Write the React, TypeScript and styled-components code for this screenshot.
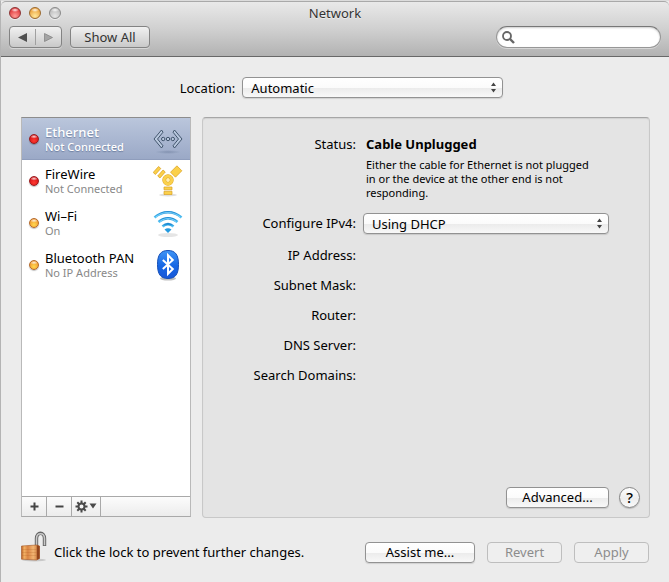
import React from "react";
import styled, { createGlobalStyle, css } from "styled-components";

const GlobalStyle = createGlobalStyle`
  * { box-sizing: border-box; }
  body {
    margin: 0;
    background: #ececec;
    color: #000;
    font-family: "Noto Sans", "Open Sans", sans-serif;
    font-size: 13px;
    line-height: 20px;
  }
  button, input, select { font: inherit; color: inherit; margin: 0; }
`;

const Window = styled.div`
  display: flex;
  flex-direction: column;
  min-height: 100vh;
  border-left: 1px solid #b4b4b4;
  border-top: 1px solid #dcdcdc;
`;

const TitleBar = styled.header`
  height: 56px;
  padding: 1px 8px 0;
  border-top: 1px solid #a9a9a9;
  border-bottom: 1px solid #686868;
  border-radius: 5px 5px 0 0;
  background: linear-gradient(#e9e9e9, #d0d0d0 50%, #b2b2b2);
`;

const TitleRow = styled.div`
  display: grid;
  grid-template-columns: 1fr auto 1fr;
  align-items: center;
  height: 20px;
`;

const Title = styled.h1`
  margin: 0;
  font-size: 13px;
  font-weight: 400;
  color: #333;
  text-shadow: 0 1px 0 rgba(255, 255, 255, 0.5);
`;

const Lights = styled.div`
  display: flex;
  gap: 8px;
`;

const Light = styled.button<{ $edge: string; $dark: string; $pale: string }>`
  width: 12px;
  height: 12px;
  padding: 0;
  border: 1px solid ${(p) => p.$edge};
  border-radius: 50%;
  background:
    radial-gradient(ellipse 4px 2px at 50% 20%, rgba(255, 255, 255, 0.9), rgba(255, 255, 255, 0)),
    radial-gradient(circle at 50% 80%, ${(p) => p.$pale}, ${(p) => p.$dark} 75%);
  box-shadow: 0 1px 0 rgba(255, 255, 255, 0.5);
`;

const Toolbar = styled.div`
  display: flex;
  align-items: center;
  margin-top: 3px;
  gap: 8px;
`;

const toolSurface = css`
  height: 22px;
  border: 1px solid #838383;
  border-radius: 4px;
  background: linear-gradient(#f1f1f1, #c9c9c9);
  box-shadow: 0 1px 0 rgba(255, 255, 255, 0.4);
`;

const ToolButton = styled.button`
  ${toolSurface}
  width: 80px;
  padding: 0;
  line-height: 20px;
  color: #333;
`;

const NavGroup = styled.div`
  ${toolSurface}
  display: flex;
  align-items: center;
  width: 53px;
`;

const NavButton = styled.button`
  display: flex;
  flex: 1;
  justify-content: center;
  align-items: center;
  height: 16px;
  padding: 0;
  border: 0;
  background: none;
  & + & { border-left: 1px solid #a0a0a0; }
`;

const SearchField = styled.label`
  display: flex;
  align-items: center;
  gap: 4px;
  width: 165px;
  height: 22px;
  margin-left: auto;
  padding: 0 8px 0 5px;
  border: 1px solid #979797;
  border-top-color: #777;
  border-radius: 11px;
  background: #fff;
  box-shadow: inset 0 1px 2px rgba(0, 0, 0, 0.2), 0 1px 0 rgba(255, 255, 255, 0.4);
`;

const SearchInput = styled.input`
  flex: 1;
  min-width: 0;
  padding: 0;
  border: 0;
  outline: 0;
  background: none;
`;

const Content = styled.main`
  display: flex;
  flex: 1;
  flex-direction: column;
  padding: 20px 19px 0 20px;
`;

const LocationRow = styled.div`
  display: flex;
  justify-content: center;
  align-items: center;
  gap: 7px;
  height: 21px;
  margin-bottom: 19px;
  padding-left: 12px;
`;

const SelectBox = styled.span<{ $width: number }>`
  display: flex;
  align-items: center;
  width: ${(p) => p.$width}px;
  height: 21px;
  padding-right: 5px;
  border: 1px solid #929292;
  border-radius: 4px;
  background: linear-gradient(#fff, #fbfbfb 50%, #ebebeb 52%, #f8f8f8);
  box-shadow: 0 1px 1px rgba(0, 0, 0, 0.12);
`;

const SelectInput = styled.select`
  flex: 1;
  height: 19px;
  padding: 0 0 0 8px;
  border: 0;
  outline: 0;
  appearance: none;
  background: none;
`;

const Columns = styled.div`
  display: flex;
  flex: 1;
  gap: 11px;
`;

const Sidebar = styled.aside`
  display: flex;
  flex: none;
  flex-direction: column;
  width: 170px;
  margin-bottom: 1px;
  border: 1px solid #b9b9b9;
  border-top-color: #8c8c8c;
  border-bottom-color: #a9a9a9;
  background: #fff;
`;

const Services = styled.ul`
  flex: 1;
  margin: 0;
  padding: 0;
  list-style: none;
`;

const Service = styled.li<{ $selected: boolean }>`
  display: flex;
  align-items: center;
  height: 42px;
  padding: 0 7px;
  ${(p) =>
    p.$selected &&
    css`
      color: #fff;
      background: linear-gradient(#bac6dc, #9aa8c6);
      box-shadow: inset 0 -1px 0 #8f9dbc;
      text-shadow: 0 1px 1px rgba(60, 80, 120, 0.5);
    `}
`;

const Dot = styled.span<{ $color: "red" | "amber" }>`
  width: 10px;
  height: 10px;
  margin-right: 6px;
  border: 1px solid ${(p) => (p.$color === "red" ? "#9a1a1c" : "#b56a2a")};
  border-radius: 50%;
  background:
    radial-gradient(ellipse 4px 2px at 50% 20%, rgba(255, 255, 255, 0.8), rgba(255, 255, 255, 0)),
    radial-gradient(circle at 50% 70%, ${(p) => (p.$color === "red" ? "#ff3a30, #c80610" : "#ffd950, #ee8424")});
  box-shadow: 0 1px 1px rgba(0, 0, 0, 0.25);
`;

const ServiceText = styled.div`
  flex: 1;
`;

const ServiceName = styled.div<{ $selected: boolean }>`
  font-weight: ${(p) => (p.$selected ? 500 : 400)};
  line-height: 15px;
`;

const ServiceState = styled.div<{ $selected: boolean }>`
  font-size: 11px;
  font-weight: ${(p) => (p.$selected ? 500 : 400)};
  line-height: 14px;
  color: ${(p) => (p.$selected ? "#fff" : "#888")};
`;

const ListActions = styled.div`
  display: flex;
  height: 20px;
  border-top: 1px solid #a9a9a9;
  background: linear-gradient(#fcfcfc, #f4f4f4 50%, #ececec);
`;

const ListButton = styled.button<{ $width: number }>`
  display: flex;
  justify-content: center;
  align-items: center;
  width: ${(p) => p.$width}px;
  padding: 0;
  border: 0;
  border-right: 1px solid #a9a9a9;
  background: none;
`;

const Panel = styled.section`
  display: flex;
  flex: 1;
  flex-direction: column;
  padding: 16px 9px 9px;
  border: 1px solid #c8c8c8;
  border-top-color: #a6a6a6;
  border-radius: 4px;
  background: #e4e4e4;
  box-shadow: inset 0 1px 1px rgba(0, 0, 0, 0.08);
`;

const Fields = styled.div`
  display: grid;
  grid-template-columns: 144px 1fr;
  align-items: center;
  column-gap: 7px;
`;

const FieldLabel = styled.label<{ $tall?: boolean }>`
  line-height: ${(p) => (p.$tall ? 34 : 30)}px;
  text-align: right;
`;

const StatusLabel = styled.span`
  align-self: start;
  text-align: right;
`;

const Value = styled.output`
  line-height: 30px;
`;

const Status = styled.div`
  padding-left: 3px;
`;

const StatusTitle = styled.strong`
  display: block;
  font-weight: 700;
`;

const StatusText = styled.p`
  max-width: 232px;
  margin: 4px 0 6px;
  font-size: 11px;
  line-height: 14px;
`;

const PanelActions = styled.div`
  display: flex;
  justify-content: flex-end;
  align-items: center;
  gap: 10px;
  margin-top: auto;
`;

const PushButton = styled.button<{ $width: number }>`
  width: ${(p) => p.$width}px;
  height: 21px;
  padding: 0 0 1px;
  border: 1px solid #929292;
  border-radius: 4px;
  background: linear-gradient(#fff, #fbfbfb 50%, #ebebeb 52%, #f8f8f8);
  box-shadow: 0 1px 1px rgba(0, 0, 0, 0.12);
  line-height: 18px;
  &:disabled {
    color: #8c8c8c;
    border-color: #bebebe;
    background: #efefef;
    box-shadow: none;
  }
`;

const HelpButton = styled.button`
  width: 21px;
  height: 21px;
  padding: 0;
  border: 1px solid #858585;
  border-radius: 50%;
  background: linear-gradient(#fff, #ededed 55%, #fafafa);
  box-shadow: 0 1px 1px rgba(0, 0, 0, 0.2);
  font-size: 15px;
  font-weight: 500;
  line-height: 19px;
`;

const Footer = styled.footer`
  display: flex;
  align-items: center;
  gap: 12px;
  height: 64px;
  padding: 4px 1px 0 0;
`;

const LockButton = styled.button`
  display: flex;
  flex: 1;
  align-items: center;
  gap: 7px;
  padding: 0;
  border: 0;
  background: none;
  text-align: left;
  svg { flex: none; margin-top: -12px; }
`;

const Arrows = () => (
  <svg width="7" height="11" viewBox="0 0 7 11" fill="#444" aria-hidden="true">
    <path d="M1 4 3.5 0.5 6 4zM1 7h5L3.5 10.500z" />
  </svg>
);

const EthernetIcon = () => (
  <svg width="30" height="32" viewBox="0 0 30 32" aria-hidden="true">
    <defs>
      <radialGradient id="ethShade">
        <stop offset="0" stopColor="#667797" stopOpacity=".5" />
        <stop offset="1" stopColor="#667797" stopOpacity="0" />
      </radialGradient>
    </defs>
    <ellipse cx="15" cy="29" rx="13" ry="2" fill="url(#ethShade)" />
    <g fill="#b9c8de" stroke="#364961" strokeWidth=".9" strokeLinejoin="round">
      <path d="M8.500 7 10 9.200 4.500 16l5.500 6.800L8.500 25 1 16z" />
      <path d="M21.500 7 20 9.200l5.500 6.800-5.500 6.800 1.500 2.200L29 16z" />
      <circle cx="10.200" cy="16" r="1.700" />
      <circle cx="15" cy="16" r="1.700" />
      <circle cx="19.800" cy="16" r="1.700" />
    </g>
  </svg>
);

const FireWireIcon = () => (
  <svg width="30" height="32" viewBox="0 0 30 32" aria-hidden="true">
    <ellipse cx="15" cy="30" rx="9" ry="1.500" fill="#000" opacity=".12" />
    <g fill="#fbd04a" stroke="#d9a023" strokeWidth=".7" strokeLinejoin="round">
      <rect x="-4.500" y="-3.500" width="9" height="7" transform="translate(23.200 6.500) rotate(-45)" />
      <rect x="-1.500" y="-4" width="3" height="8" transform="translate(4 5.500) rotate(42)" />
      <rect x="-1.500" y="-4" width="3" height="8" transform="translate(8.500 9) rotate(42)" />
      <rect x="11" y="22" width="8" height="2.800" />
      <rect x="11" y="26.300" width="8" height="3.200" />
    </g>
    <circle cx="15" cy="15" r="3.800" fill="#ffeeb0" stroke="#dfa628" strokeWidth="3.800" />
    <circle cx="15" cy="15" r="3.800" fill="none" stroke="#fbd14c" strokeWidth="2.800" />
  </svg>
);

const WifiIcon = () => (
  <svg width="30" height="32" viewBox="0 0 30 32" aria-hidden="true">
    <defs>
      <linearGradient id="wifiBlue" x1="0" y1="0" x2="0" y2="1">
        <stop offset="0" stopColor="#1c8cd5" />
        <stop offset="1" stopColor="#56c3f4" />
      </linearGradient>
    </defs>
    <ellipse cx="15" cy="28" rx="10" ry="2" fill="#000" opacity=".1" />
    <g fill="none" stroke="url(#wifiBlue)" strokeWidth="2.600">
      <path d="M1.500 10.500c8-7 19-7 27 0" />
      <path d="M5.500 15c6-5 13-5 19 0" />
      <path d="M9.500 19.500c3.500-3 7.500-3 11 0" />
    </g>
    <path d="M11.500 22.500q3.500-2.500 7 0L15 26z" fill="#249adf" />
    <g fill="none" stroke="#8bd9ff" strokeWidth=".8">
      <path d="M3 9.900c7.200-6 16.800-6 24 0M7 14.500c5-4 11-4 16 0" />
    </g>
  </svg>
);

const BluetoothIcon = () => (
  <svg width="30" height="32" viewBox="0 0 30 32" aria-hidden="true">
    <defs>
      <linearGradient id="btBlue" x1="0" y1="0" x2="0" y2="1">
        <stop offset="0" stopColor="#3f94f5" />
        <stop offset=".55" stopColor="#1767e4" />
        <stop offset="1" stopColor="#1857d8" />
      </linearGradient>
    </defs>
    <ellipse cx="15" cy="29.500" rx="8" ry="2" fill="#000" opacity=".25" />
    <path
      d="M15 1.500C22.500 1.500 25.500 6 25.500 15.500S22.500 29.500 15 29.500 4.500 25 4.500 15.500 7.500 1.500 15 1.500z"
      fill="url(#btBlue)"
      stroke="#1650b8"
    />
    <path d="M9.800 11 19.800 20 15 24.800V6.200l4.800 4.800L9.800 20" fill="none" stroke="#fff" strokeWidth="2" />
  </svg>
);

const GearIcon = () => (
  <svg width="22" height="13" viewBox="0 0 22 13" aria-hidden="true">
    <g stroke="#4a4a4a" strokeWidth="2">
      <path d="M6.500 .5v12M.5 6.500h12M2.300 2.300l8.400 8.400M10.700 2.300l-8.400 8.400" />
    </g>
    <circle cx="6.500" cy="6.500" r="3" fill="#f4f4f4" stroke="#4a4a4a" strokeWidth="2" />
    <path d="M14.500 3.500h7L18 8.500z" fill="#4a4a4a" />
  </svg>
);

const LockIcon = () => (
  <svg width="26" height="31" viewBox="0 0 26 31" aria-hidden="true">
    <defs>
      <linearGradient id="lockBody" x1="0" y1="0" x2="1" y2="0">
        <stop offset="0" stopColor="#b75d22" />
        <stop offset=".15" stopColor="#f3b265" />
        <stop offset=".35" stopColor="#d98443" />
        <stop offset=".65" stopColor="#f2b572" />
        <stop offset="1" stopColor="#c06c30" />
      </linearGradient>
    </defs>
    <ellipse cx="13" cy="29" rx="12" ry="1.500" fill="#000" opacity=".15" />
    <path d="M15.500 15V7.500c0-7 8-7 8 0V15" fill="none" stroke="#656565" strokeWidth="3.400" />
    <path d="M15.500 15V7.500c0-6.500 8-6.500 8 0v6.800" fill="none" stroke="#c8c8c8" strokeWidth="1.500" />
    <path d="M.5 15 15.500 14l3 1v12.500l-3 1.500-15-.8z" fill="url(#lockBody)" stroke="#a45725" strokeWidth=".6" />
    <path d="M1 18.500h14.500M1 21.500h14.500M1 24.500h14.500" stroke="#a9581f" strokeWidth=".5" opacity=".4" />
    <path d="M15.800 14.200l2.700.8v12.500l-2.700 1.300z" fill="#93451b" />
  </svg>
);

type ServiceItem = {
  name: string;
  state: string;
  color: "red" | "amber";
  icon: React.ReactNode;
};

const services: ServiceItem[] = [
  { name: "Ethernet", state: "Not Connected", color: "red", icon: <EthernetIcon /> },
  { name: "FireWire", state: "Not Connected", color: "red", icon: <FireWireIcon /> },
  { name: "Wi\u2013Fi", state: "On", color: "amber", icon: <WifiIcon /> },
  { name: "Bluetooth PAN", state: "No IP Address", color: "amber", icon: <BluetoothIcon /> },
];

const details = [
  ["ip", "IP Address:"],
  ["mask", "Subnet Mask:"],
  ["router", "Router:"],
  ["dns", "DNS Server:"],
  ["search", "Search Domains:"],
];

export default function App() {
  return (
    <Window>
      <GlobalStyle />
      <TitleBar>
        <TitleRow>
          <Lights>
            <Light aria-label="Close" $edge="#8d3434" $dark="#e0383c" $pale="#ff9a94" />
            <Light aria-label="Minimize" $edge="#9a6a30" $dark="#eba23c" $pale="#ffe79a" />
            <Light aria-label="Zoom" $edge="#8a8a8a" $dark="#bcbcbc" $pale="#e6e6e6" />
          </Lights>
          <Title>Network</Title>
        </TitleRow>
        <Toolbar>
          <NavGroup>
            <NavButton aria-label="Back">
              <svg width="9" height="9" viewBox="0 0 9 9"><path d="M9 0v9L0 4.500z" fill="#505050" /></svg>
            </NavButton>
            <NavButton aria-label="Forward">
              <svg width="9" height="9" viewBox="0 0 9 9"><path d="M.5.500v8l8-4z" fill="#a4a4a4" stroke="#7e7e7e" strokeWidth=".7" /></svg>
            </NavButton>
          </NavGroup>
          <ToolButton>Show All</ToolButton>
          <SearchField>
            <svg width="13" height="13" viewBox="0 0 13 13" fill="none" stroke="#666" aria-hidden="true">
              <circle cx="5" cy="5" r="4" strokeWidth="1.800" />
              <path d="M8 8l4 4" strokeWidth="2.400" />
            </svg>
            <SearchInput type="text" aria-label="Search" />
          </SearchField>
        </Toolbar>
      </TitleBar>

      <Content>
        <LocationRow>
          <label htmlFor="location">Location:</label>
          <SelectBox $width={261}>
            <SelectInput id="location"><option>Automatic</option></SelectInput>
            <Arrows />
          </SelectBox>
        </LocationRow>

        <Columns>
          <Sidebar>
            <Services>
              {services.map((s, i) => (
                <Service key={s.name} $selected={i === 0}>
                  <Dot $color={s.color} />
                  <ServiceText>
                    <ServiceName $selected={i === 0}>{s.name}</ServiceName>
                    <ServiceState $selected={i === 0}>{s.state}</ServiceState>
                  </ServiceText>
                  {s.icon}
                </Service>
              ))}
            </Services>
            <ListActions>
              <ListButton $width={25} aria-label="Add service">
                <svg width="9" height="9" viewBox="0 0 9 9"><path d="M4.500 .5v8M.5 4.500h8" stroke="#444" strokeWidth="2" /></svg>
              </ListButton>
              <ListButton $width={25} aria-label="Remove service">
                <svg width="9" height="9" viewBox="0 0 9 9"><path d="M.5 4.500h8" stroke="#444" strokeWidth="2" /></svg>
              </ListButton>
              <ListButton $width={29} aria-label="Service actions"><GearIcon /></ListButton>
            </ListActions>
          </Sidebar>

          <Panel>
            <Fields>
              <StatusLabel>Status:</StatusLabel>
              <Status>
                <StatusTitle>Cable Unplugged</StatusTitle>
                <StatusText>
                  Either the cable for Ethernet is not plugged in or the device at the other end is not responding.
                </StatusText>
              </Status>
              <FieldLabel htmlFor="ipv4" $tall>Configure IPv4:</FieldLabel>
              <SelectBox $width={246}>
                <SelectInput id="ipv4"><option>Using DHCP</option></SelectInput>
                <Arrows />
              </SelectBox>
              {details.map(([id, label]) => (
                <React.Fragment key={id}>
                  <FieldLabel htmlFor={id}>{label}</FieldLabel>
                  <Value id={id} />
                </React.Fragment>
              ))}
            </Fields>
            <PanelActions>
              <PushButton $width={103}>Advanced...</PushButton>
              <HelpButton aria-label="Help">?</HelpButton>
            </PanelActions>
          </Panel>
        </Columns>

        <Footer>
          <LockButton>
            <LockIcon />
            Click the lock to prevent further changes.
          </LockButton>
          <PushButton $width={110}>Assist me...</PushButton>
          <PushButton $width={75} disabled>Revert</PushButton>
          <PushButton $width={75} disabled>Apply</PushButton>
        </Footer>
      </Content>
    </Window>
  );
}
